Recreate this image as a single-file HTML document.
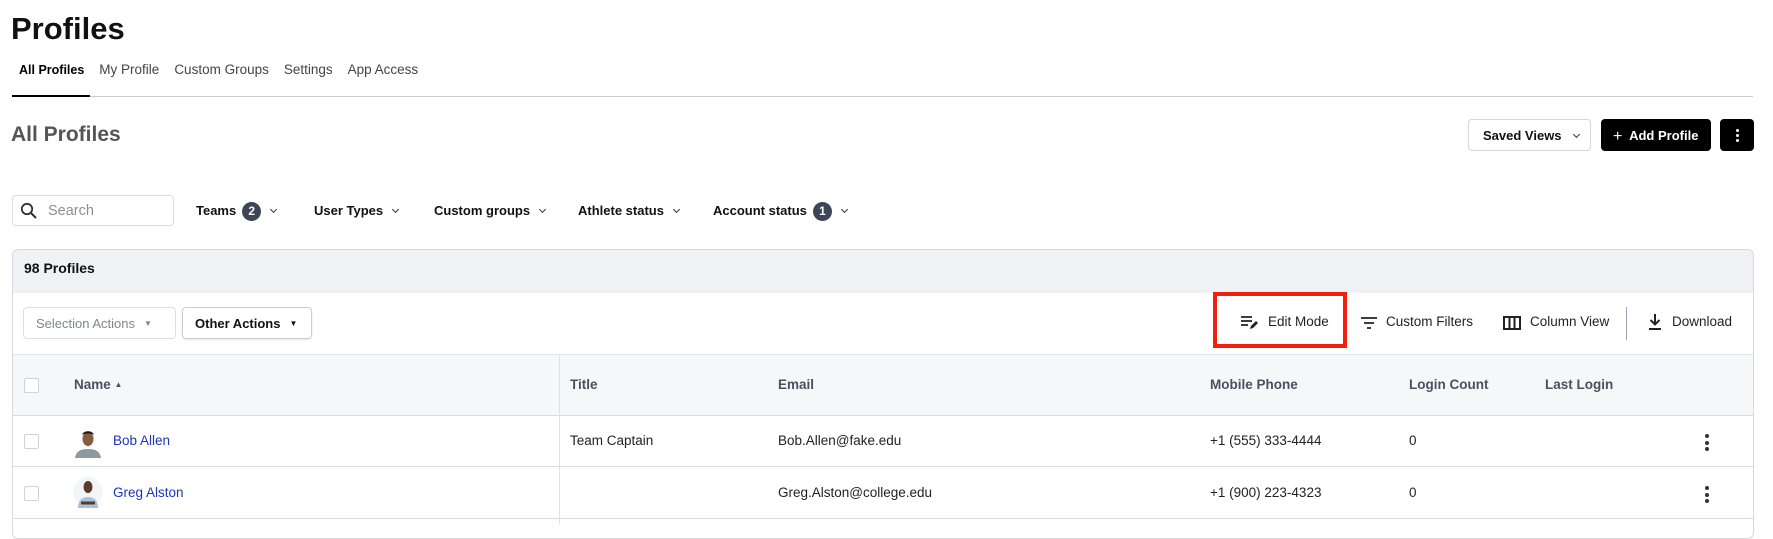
<!DOCTYPE html>
<html><head><meta charset="utf-8"><style>
*{box-sizing:border-box;margin:0;padding:0}
body{width:1773px;height:523px;overflow:hidden;background:#fff;font-family:"Liberation Sans",Arial,sans-serif;color:#111;position:relative}
.a{position:absolute;white-space:nowrap}
.b{font-weight:bold}
.chev{display:inline-block;width:5px;height:5px;border-right:1.5px solid #333;border-bottom:1.5px solid #333;transform:rotate(45deg);margin-left:10px;position:relative;top:-3px}
.badge{display:inline-block;width:19px;height:19px;border-radius:50%;background:#3d4657;color:#fff;font-size:12px;text-align:center;line-height:19px;margin-left:6px;font-weight:bold}
.f{top:201px;font-size:13px;font-weight:bold;line-height:19px}
.hd{font-size:13.5px;font-weight:bold;color:#4b5060;top:377px}
.td{font-size:13.5px;color:#222}
.cb{width:15px;height:15px;border:1px solid #d0d3da;border-radius:2px;background:#fff}
.kb{width:4px}
.kb i{display:block;width:4px;height:4px;border-radius:50%;background:#333;margin-bottom:2.5px}
</style></head><body>
<div class="a b" style="left:11px;top:11px;font-size:31px">Profiles</div>
<div class="a" style="left:19px;top:62px;font-size:13.5px;color:#444"><b style="color:#000;font-size:12.5px">All Profiles</b><span style="margin-left:15px">My Profile</span><span style="margin-left:15px">Custom Groups</span><span style="margin-left:15px">Settings</span><span style="margin-left:15px">App Access</span></div>
<div class="a" style="left:12px;top:96px;width:1741px;height:1px;background:#c8ccd4"></div>
<div class="a" style="left:12px;top:95px;width:78px;height:2px;background:#000"></div>
<div class="a b" style="left:11px;top:123px;font-size:21px;color:#555">All Profiles</div>
<div class="a" style="left:1468px;top:119px;width:123px;height:32px;border:1px solid #d3d6dc;border-radius:4px;font-size:13px;font-weight:bold;padding:8px 0 0 14px">Saved Views<span class="chev" style="margin-left:12px"></span></div>
<div class="a" style="left:1601px;top:119px;width:110px;height:32px;background:#000;border-radius:4px;color:#fff;font-size:13px;font-weight:bold;padding:8px 0 0 12px"><span style="font-weight:normal;font-size:16px;position:relative;top:1px">+</span>&nbsp; Add Profile</div>
<div class="a" style="left:1720px;top:119px;width:34px;height:32px;background:#000;border-radius:4px"><div style="position:absolute;left:15.5px;top:10px;width:3px"><i style="display:block;width:3px;height:3px;background:#fff;border-radius:50%;margin-bottom:2px"></i><i style="display:block;width:3px;height:3px;background:#fff;border-radius:50%;margin-bottom:2px"></i><i style="display:block;width:3px;height:3px;background:#fff;border-radius:50%"></i></div></div>

<div class="a" style="left:12px;top:195px;width:162px;height:31px;border:1px solid #dadde3;border-radius:4px"></div>
<svg class="a" style="left:20px;top:202px" width="18" height="18" viewBox="0 0 18 18"><circle cx="7" cy="7" r="5.2" fill="none" stroke="#333" stroke-width="1.8"/><path d="M11 11l5 5" stroke="#333" stroke-width="2"/></svg>
<div class="a" style="left:48px;top:203px;font-size:14.5px;color:#8a8f99">Search</div>
<div class="a f" style="left:196px">Teams<span class="badge">2</span><span class="chev"></span></div>
<div class="a f" style="left:314px">User Types<span class="chev"></span></div>
<div class="a f" style="left:434px">Custom groups<span class="chev"></span></div>
<div class="a f" style="left:578px">Athlete status<span class="chev"></span></div>
<div class="a f" style="left:713px">Account status<span class="badge">1</span><span class="chev"></span></div>

<div class="a" style="left:12px;top:249px;width:1742px;height:290px;border:1px solid #d6d9e0;border-radius:6px;overflow:hidden">
 <div style="height:43px;background:#f0f1f5"></div>
</div>
<div class="a b" style="left:24px;top:260px;font-size:14px">98 Profiles</div>
<div class="a" style="left:23px;top:307px;width:153px;height:32px;border:1px solid #dcdfe5;border-radius:4px;font-size:13px;color:#80858f;padding:8px 0 0 12px">Selection Actions<span style="font-size:8px;margin-left:9px;position:relative;top:-2px">▼</span></div>
<div class="a" style="left:182px;top:307px;width:130px;height:32px;border:1px solid #c9cdd4;border-radius:4px;font-size:13px;font-weight:bold;padding:8px 0 0 12px;box-shadow:0 1px 2px rgba(0,0,0,.1)">Other Actions<span style="font-size:8px;margin-left:9px;position:relative;top:-2px">▼</span></div>

<div class="a" style="left:1213px;top:292px;width:134px;height:56px;border:4px solid #f11f0c"></div>
<svg class="a" style="left:1240px;top:314px" width="20" height="16" viewBox="0 0 20 16"><path d="M1 3h11M1 7h11M1 11h7" stroke="#222" stroke-width="1.8"/><path d="M10 15l1-3 5-5 2 2-5 5z" fill="#222"/></svg>
<div class="a td" style="left:1268px;top:314px">Edit Mode</div>
<svg class="a" style="left:1360px;top:316px" width="18" height="14" viewBox="0 0 18 14"><path d="M1 2h16M4 7h10M7 12h4" stroke="#222" stroke-width="1.8"/></svg>
<div class="a td" style="left:1386px;top:314px">Custom Filters</div>
<svg class="a" style="left:1503px;top:316px" width="18" height="14" viewBox="0 0 18 14"><rect x="1" y="1" width="16" height="12" fill="none" stroke="#222" stroke-width="2"/><path d="M6.5 1v12M11.5 1v12" stroke="#222" stroke-width="2"/></svg>
<div class="a td" style="left:1530px;top:314px">Column View</div>
<div class="a" style="left:1626px;top:307px;width:1px;height:33px;background:#9aa3b5"></div>
<svg class="a" style="left:1647px;top:313px" width="16" height="18" viewBox="0 0 16 18"><path d="M8 1v10M3.5 7l4.5 4.5L12.5 7" fill="none" stroke="#222" stroke-width="2"/><path d="M2 16h12" stroke="#222" stroke-width="2"/></svg>
<div class="a td" style="left:1672px;top:314px">Download</div>

<div class="a" style="left:13px;top:354px;width:1740px;height:62px;background:#f6f7f9;border-top:1px solid #e1e3e8;border-bottom:1px solid #d9dce3"></div>
<div class="a" style="left:13px;top:466px;width:1740px;height:1px;background:#d9dce3"></div>
<div class="a" style="left:13px;top:518px;width:1740px;height:1px;background:#d9dce3"></div>
<div class="a" style="left:559px;top:354px;width:1px;height:170px;background:#dfe1e6"></div>

<div class="a cb" style="left:24px;top:378px"></div>
<div class="a hd" style="left:74px">Name <span style="font-size:8px;position:relative;top:-2px">▲</span></div>
<div class="a hd" style="left:570px">Title</div>
<div class="a hd" style="left:778px">Email</div>
<div class="a hd" style="left:1210px">Mobile Phone</div>
<div class="a hd" style="left:1409px">Login Count</div>
<div class="a hd" style="left:1545px">Last Login</div>

<div class="a cb" style="left:24px;top:434px"></div>
<svg class="a" style="left:73px;top:426px" width="30" height="32" viewBox="0 0 30 32"><circle cx="15" cy="16" r="15" fill="#fff"/><path d="M2 32c1-7 6-9 13-9s12 2 13 9z" fill="#8d9aa0"/><ellipse cx="15" cy="13" rx="5.5" ry="7" fill="#8a5a3c"/><path d="M9 9c1-5 11-5 12 0-2-2-10-2-12 0z" fill="#1a1a1a"/></svg>
<div class="a td" style="left:113px;top:433px;color:#1d35b8">Bob Allen</div>
<div class="a td" style="left:570px;top:433px">Team Captain</div>
<div class="a td" style="left:778px;top:433px">Bob.Allen@fake.edu</div>
<div class="a td" style="left:1210px;top:433px">+1 (555) 333-4444</div>
<div class="a td" style="left:1409px;top:433px">0</div>
<div class="a kb" style="left:1705px;top:434px"><i></i><i></i><i></i></div>

<div class="a cb" style="left:24px;top:486px"></div>
<svg class="a" style="left:73px;top:476px" width="30" height="32" viewBox="0 0 30 32"><circle cx="15" cy="16" r="15" fill="#f4f5f7"/><path d="M5 32c0-8 4-11 10-11s10 3 10 11z" fill="#a9c3de"/><ellipse cx="15" cy="11" rx="4.5" ry="6" fill="#5a3a28"/><path d="M8 27h14" stroke="#5a3a28" stroke-width="3"/></svg>
<div class="a td" style="left:113px;top:485px;color:#1d35b8">Greg Alston</div>
<div class="a td" style="left:778px;top:485px">Greg.Alston@college.edu</div>
<div class="a td" style="left:1210px;top:485px">+1 (900) 223-4323</div>
<div class="a td" style="left:1409px;top:485px">0</div>
<div class="a kb" style="left:1705px;top:486px"><i></i><i></i><i></i></div>
</body></html>
